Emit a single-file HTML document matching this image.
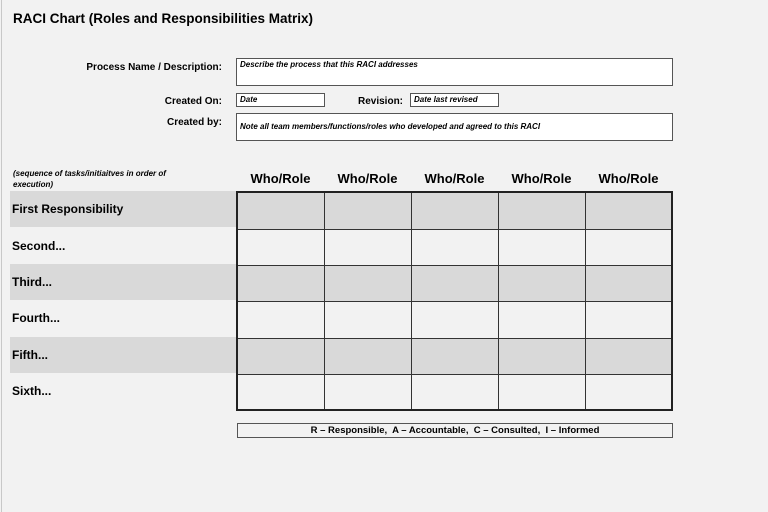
<!DOCTYPE html>
<html><head><style>
*{margin:0;padding:0;box-sizing:border-box}
body{width:768px;height:512px;background:#f2f2f2;position:relative;overflow:hidden;font-family:"Liberation Sans",sans-serif;color:#000}
.a{position:absolute}
.b{font-weight:bold}
.box{position:absolute;background:#fff;border:1px solid #555;font-size:8px;font-style:italic;font-weight:bold;padding:1px 3px}
.lbl{position:absolute;font-size:10px;font-weight:bold;text-align:right}
.row{position:absolute;left:10px;width:227px;height:36px;font-size:12px;font-weight:bold;padding-left:2px;line-height:36px}
.g{background:#d9d9d9}
.hd{position:absolute;top:171px;width:87px;text-align:center;font-size:13px;font-weight:bold}
td{width:87px;border:1px solid #333;padding:0}
</style></head><body>
<div class="a" style="left:1px;top:0;width:1px;height:512px;background:#c8c8c8"></div>
<div class="a b" style="left:13px;top:11px;font-size:13.5px">RACI Chart (Roles and Responsibilities Matrix)</div>
<div class="lbl" style="right:546px;top:62px">Process Name / Description:</div>
<div class="box" style="left:236px;top:58px;width:437px;height:28px">Describe the process that this RACI addresses</div>
<div class="lbl" style="right:546px;top:96px">Created On:</div>
<div class="box" style="left:236px;top:93px;width:89px;height:14px;line-height:10px">Date</div>
<div class="lbl" style="left:358px;top:96px">Revision:</div>
<div class="box" style="left:410px;top:93px;width:89px;height:14px;line-height:10px">Date last revised</div>
<div class="lbl" style="right:546px;top:117px">Created by:</div>
<div class="box" style="left:236px;top:113px;width:437px;height:28px;line-height:24px">Note all team members/functions/roles who developed and agreed to this RACI</div>
<div class="a" style="left:13px;top:168px;font-size:8px;font-style:italic;font-weight:bold;width:190px;line-height:11px">(sequence of tasks/initiaitves in order of execution)</div>
<div class="hd" style="left:237px">Who/Role</div>
<div class="hd" style="left:324px">Who/Role</div>
<div class="hd" style="left:411px">Who/Role</div>
<div class="hd" style="left:498px">Who/Role</div>
<div class="hd" style="left:585px">Who/Role</div>
<div class="row g" style="top:191px">First Responsibility</div>
<div class="row" style="top:228px">Second...</div>
<div class="row g" style="top:264px">Third...</div>
<div class="row" style="top:300px">Fourth...</div>
<div class="row g" style="top:337px">Fifth...</div>
<div class="row" style="top:373px">Sixth...</div>
<table class="a" style="left:236px;top:191px;border-collapse:collapse;border:2px solid #222">
<tr style="height:37px;background:#d9d9d9"><td></td><td></td><td></td><td></td><td></td></tr>
<tr style="height:36px"><td></td><td></td><td></td><td></td><td></td></tr>
<tr style="height:36px;background:#d9d9d9"><td></td><td></td><td></td><td></td><td></td></tr>
<tr style="height:37px"><td></td><td></td><td></td><td></td><td></td></tr>
<tr style="height:36px;background:#d9d9d9"><td></td><td></td><td></td><td></td><td></td></tr>
<tr style="height:36px"><td></td><td></td><td></td><td></td><td></td></tr>
</table>
<div class="a" style="left:237px;top:423px;width:436px;height:15px;border:1px solid #555;font-size:9.5px;font-weight:bold;text-align:center;line-height:13px">R – Responsible,&nbsp; A – Accountable,&nbsp; C – Consulted,&nbsp; I – Informed</div>
</body></html>
